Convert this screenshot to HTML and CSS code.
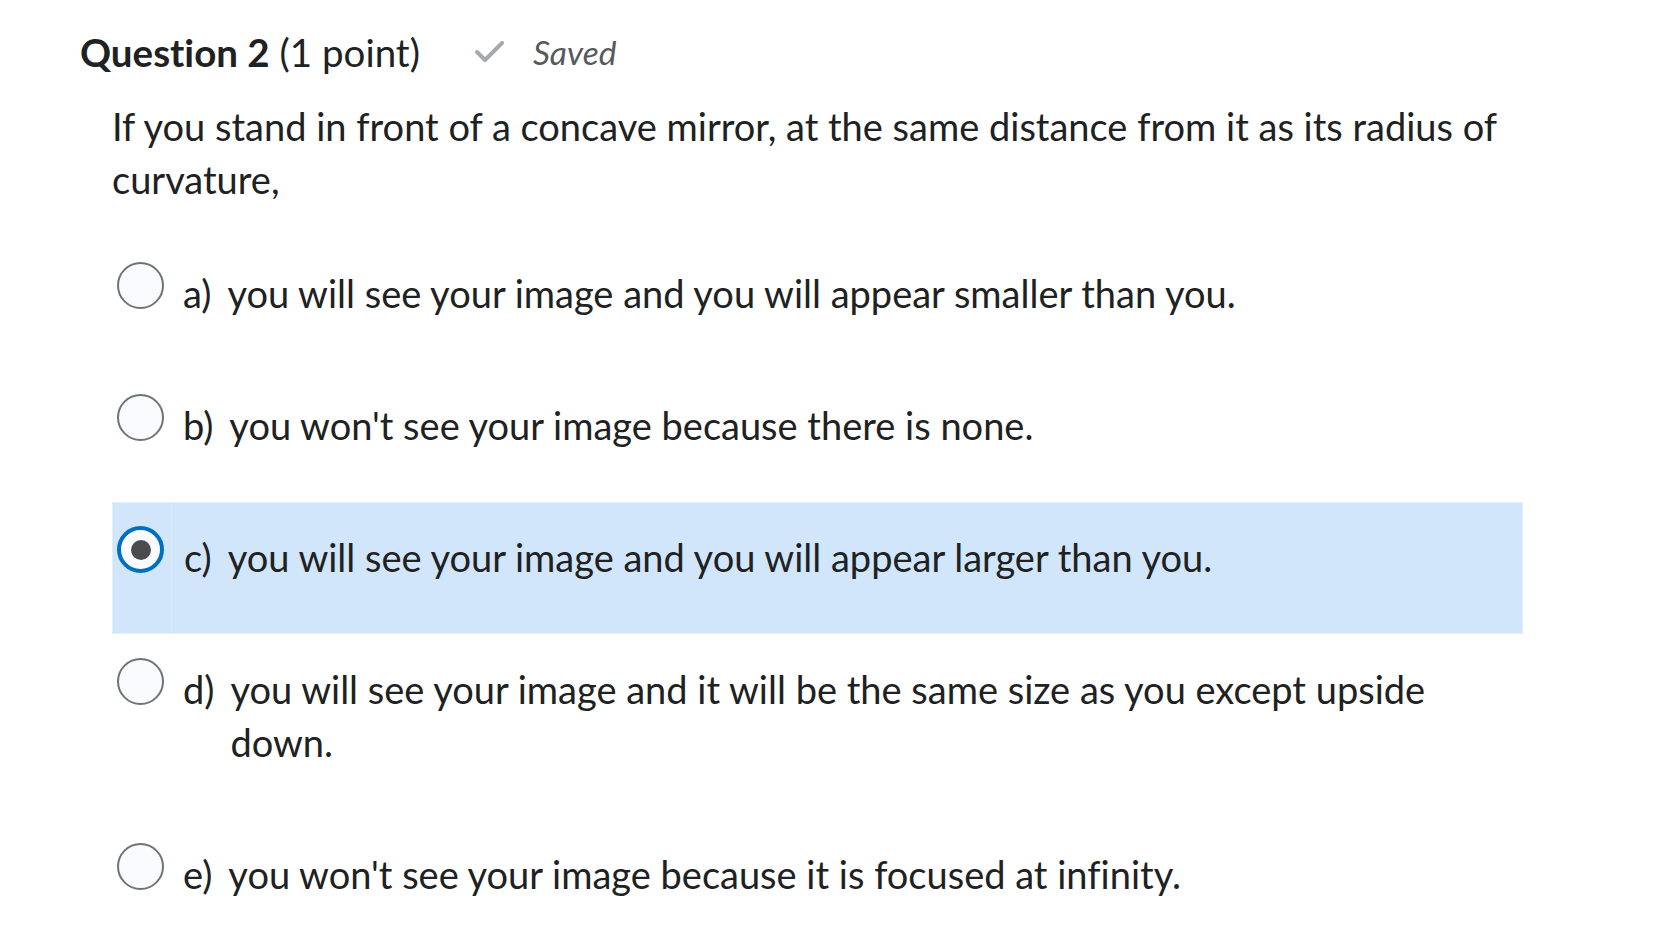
FILE: index.html
```html
<!DOCTYPE html>
<html lang="en">
<head>
  <meta charset="UTF-8">
  <meta name="viewport" content="width=device-width, initial-scale=1.0">
  <title>Quiz - Question 2</title>
  <link rel="stylesheet" href="styles.css">
</head>
<body>
  <div class="question">
    <div class="qHeader">
      <h2 class="qTitle"><strong>Question 2</strong> (1 point)</h2>
      <span class="saved">
        <svg class="savedIcon" viewBox="0 0 30 22" width="30" height="22" aria-hidden="true">
          <polyline points="2,11 10,19 27,2" fill="none" stroke="#a6aaad" stroke-width="4" stroke-linecap="round" stroke-linejoin="round"/>
        </svg>
        Saved
      </span>
    </div>

    <div class="qBody">
      <p class="qText">If you stand in front of a concave mirror, at the same distance from it as its radius of curvature,</p>

      <div class="choices">
        <label class="choice">
          <span class="radioCell"><span class="radio"></span></span>
          <span class="choiceText"><span class="letter">a)</span><span>you will see your image and you will appear smaller than you.</span></span>
        </label>
        <label class="choice">
          <span class="radioCell"><span class="radio"></span></span>
          <span class="choiceText"><span class="letter">b)</span><span>you won't see your image because there is none.</span></span>
        </label>
        <label class="choice selected">
          <span class="radioCell"><span class="radio checked"></span></span>
          <span class="choiceText"><span class="letter">c)</span><span>you will see your image and you will appear larger than you.</span></span>
        </label>
        <label class="choice">
          <span class="radioCell"><span class="radio"></span></span>
          <span class="choiceText"><span class="letter">d)</span><span>you will see your image and it will be the same size as you except upside down.</span></span>
        </label>
        <label class="choice">
          <span class="radioCell"><span class="radio"></span></span>
          <span class="choiceText"><span class="letter">e)</span><span>you won't see your image because it is focused at infinity.</span></span>
        </label>
      </div>
    </div>
  </div>
</body>
</html>
```

FILE: styles.css
```css
* {
  box-sizing: border-box;
}

body {
  font-family: Lato, 'Noto Sans', sans-serif;
  font-variant-ligatures: none;
  background-color: #ffffff;
  color: #202122;
  margin: 0;
  padding: 0;
}

.question {
  padding: 29px 0 0 80px;
  width: 1523px;
}

/* Title row: "Question 2 (1 point)" + saved status */
.qHeader {
  display: flex;
  align-items: center;
  height: 46px;
}

.qTitle {
  margin: 0;
  font-size: 38.5px;
  font-weight: normal;
  line-height: 46px;
}

.qTitle strong {
  font-weight: bold;
}

.saved {
  display: flex;
  align-items: center;
  gap: 28px;
  margin-left: 55px;
  font-size: 33.5px;
  font-style: italic;
  color: #565a5c;
}

.qBody {
  padding-left: 32px;
}

.qText {
  margin: 25px 0 32px 0;
  font-size: 38px;
  line-height: 53px;
}

.choice {
  display: flex;
  align-items: flex-start;
  font-size: 38px;
  line-height: 53px;
  cursor: pointer;
}

.choice.selected {
  background-color: #d1e6fa;
  box-shadow: inset 0 0 0 1px #e3effb;
}

.radioCell {
  width: 59px;
  flex-shrink: 0;
  padding: 24px 0 0 5px;
}

.radio {
  display: block;
  width: 47px;
  height: 47px;
  border-radius: 50%;
  border: 2px solid #6e7376;
  background-color: #f9fbff;
  position: relative;
}

.radio.checked {
  border: 4px solid #006fbf;
}

.radio.checked::after {
  content: '';
  position: absolute;
  top: 9.5px;
  left: 9.5px;
  width: 20px;
  height: 20px;
  border-radius: 50%;
  background-color: #494c4e;
}

.choiceText {
  display: flex;
  gap: 16px;
  padding: 29px 12px 50px 12px;
  flex: 1;
}

.choice.selected .choiceText {
  border-left: 1px solid #d8e9fa;
}

.letter {
  flex-shrink: 0;
}
```
